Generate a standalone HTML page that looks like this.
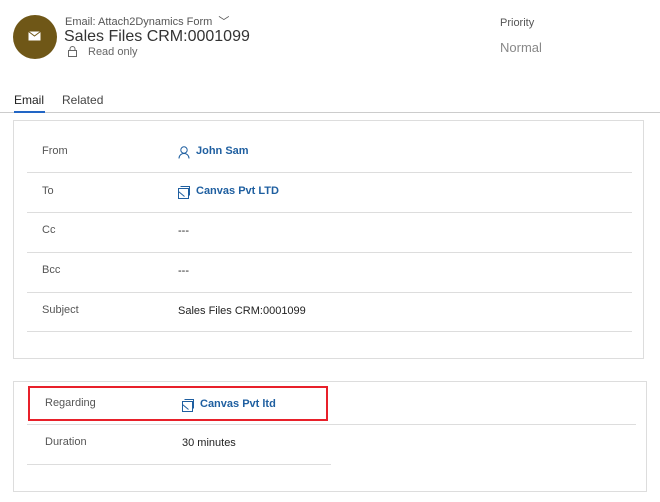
<!DOCTYPE html>
<html><head><style>
body{margin:0;width:660px;height:502px;background:#fff;font-family:"Segoe UI","Liberation Sans",sans-serif;position:relative;overflow:hidden;color:#333}
.a{position:absolute;white-space:nowrap}
.lbl{font-size:11px;color:#555}
.lnk{font-size:11px;color:#1f5fa0;font-weight:bold}
.val{font-size:11px;color:#222}
.hl{position:absolute;height:1px;background:#ddd}
</style></head><body>
<div class="a" style="left:13px;top:15px;width:44px;height:44px;border-radius:50%;background:#6f5717"></div>
<svg class="a" style="left:28px;top:31px" width="13" height="10" viewBox="0 0 13 10"><rect x="0.5" y="0.5" width="12" height="9" fill="#fff"/><path d="M0.5 0.5 L6.5 5 L12.5 0.5" stroke="#6f5717" fill="none"/></svg>
<div class="a" style="left:65px;top:13px;font-size:11px;color:#555">Email: Attach2Dynamics Form &nbsp;﹀</div>
<div class="a" style="left:64px;top:28px;font-size:16px;color:#333">Sales Files CRM:0001099</div>
<svg class="a" style="left:68px;top:46px" width="9" height="11" viewBox="0 0 9 11"><rect x="0.5" y="4.5" width="8" height="6" fill="none" stroke="#666"/><path d="M2 4.5V3a2.5 2.5 0 0 1 5 0v1.5" fill="none" stroke="#666"/></svg>
<div class="a" style="left:88px;top:46px;font-size:11px;color:#666">Read only</div>
<div class="a" style="left:500px;top:17px;font-size:11px;color:#555">Priority</div>
<div class="a" style="left:500px;top:40px;font-size:13px;color:#888">Normal</div>
<div class="a" style="left:14px;top:93px;font-size:12px;color:#222">Email</div>
<div class="a" style="left:62px;top:93px;font-size:12px;color:#444">Related</div>
<div class="hl" style="left:0;top:112px;width:660px;background:#ccc"></div>
<div class="a" style="left:14px;top:111px;width:31px;height:2px;background:#2266c5"></div>

<div class="a" style="left:13px;top:120px;width:629px;height:237px;border:1px solid #ddd"></div>
<div class="a lbl" style="left:42px;top:145px">From</div>
<svg class="a" style="left:178px;top:146px" width="12" height="13" viewBox="0 0 12 13"><circle cx="6" cy="4" r="3.2" fill="none" stroke="#1f5fa0"/><path d="M1 12.5c0-3 2.2-5 5-5s5 2 5 5" fill="none" stroke="#1f5fa0"/></svg>
<div class="a lnk" style="left:196px;top:145px">John Sam</div>
<div class="hl" style="left:27px;top:172px;width:605px"></div>
<div class="a lbl" style="left:42px;top:185px">To</div>
<svg class="a" style="left:178px;top:186px" width="12" height="13" viewBox="0 0 12 13"><rect x="0.5" y="2.5" width="10" height="10" fill="none" stroke="#1f5fa0"/><path d="M2.5 0.5h9v9M0.5 5.5l6 5" fill="none" stroke="#1f5fa0"/></svg>
<div class="a lnk" style="left:196px;top:185px">Canvas Pvt LTD</div>
<div class="hl" style="left:27px;top:212px;width:605px"></div>
<div class="a lbl" style="left:42px;top:224px">Cc</div>
<div class="a val" style="left:178px;top:225px">---</div>
<div class="hl" style="left:27px;top:252px;width:605px"></div>
<div class="a lbl" style="left:42px;top:264px">Bcc</div>
<div class="a val" style="left:178px;top:265px">---</div>
<div class="hl" style="left:27px;top:292px;width:605px"></div>
<div class="a lbl" style="left:42px;top:304px">Subject</div>
<div class="a val" style="left:178px;top:305px">Sales Files CRM:0001099</div>
<div class="hl" style="left:27px;top:331px;width:605px"></div>

<div class="a" style="left:13px;top:381px;width:632px;height:109px;border:1px solid #ddd"></div>
<div class="a" style="left:28px;top:386px;width:296px;height:31px;border:2px solid #e8202a"></div>
<div class="a lbl" style="left:45px;top:397px">Regarding</div>
<svg class="a" style="left:182px;top:399px" width="12" height="13" viewBox="0 0 12 13"><rect x="0.5" y="2.5" width="10" height="10" fill="none" stroke="#1f5fa0"/><path d="M2.5 0.5h9v9M0.5 5.5l6 5" fill="none" stroke="#1f5fa0"/></svg>
<div class="a lnk" style="left:200px;top:398px">Canvas Pvt ltd</div>
<div class="hl" style="left:27px;top:424px;width:609px"></div>
<div class="a lbl" style="left:45px;top:436px">Duration</div>
<div class="a val" style="left:182px;top:437px">30 minutes</div>
<div class="hl" style="left:27px;top:464px;width:304px"></div>
</body></html>
